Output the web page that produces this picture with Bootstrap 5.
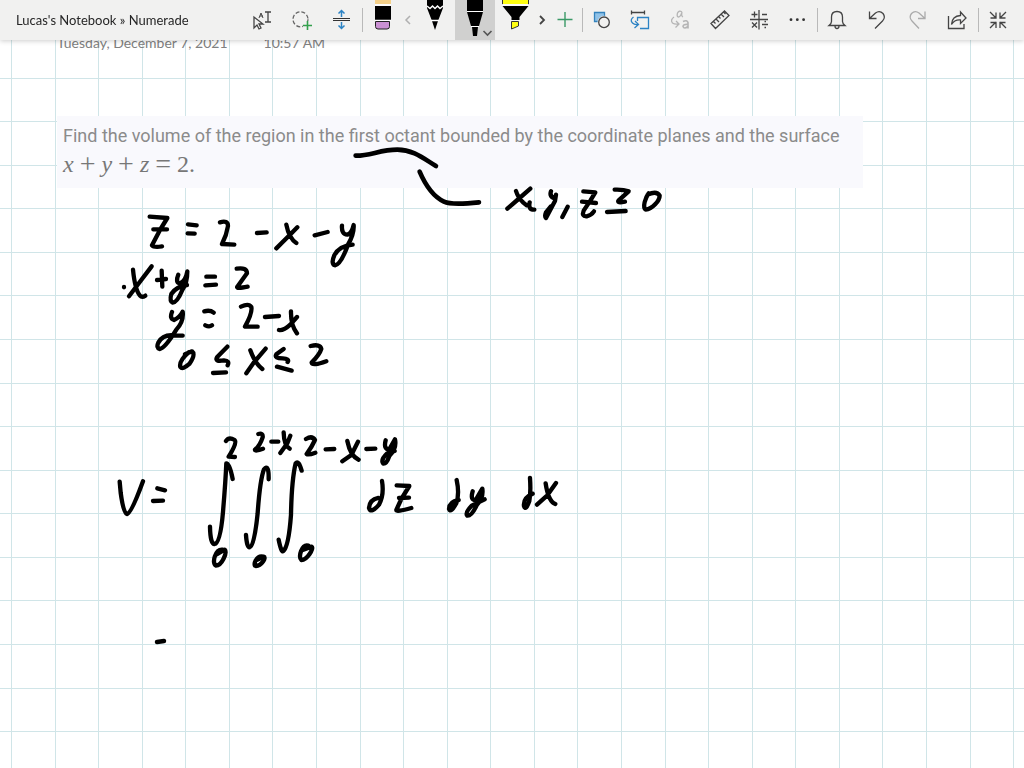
<!DOCTYPE html>
<html lang="en">
<head>
<meta charset="utf-8">
<meta name="viewport" content="width=device-width, initial-scale=1">
<title>Lucas's Notebook » Numerade</title>
<link rel="stylesheet" href="https://cdn.jsdelivr.net/npm/bootstrap@5.3.0/dist/css/bootstrap.min.css">
<style>
  body { font-family: Lato, "Open Sans", sans-serif; background: #fff; color: #262626; }
  .topbar { height: 40px; padding: 0 5px 0 16px; background: #f1f1f0; box-shadow: 0 1px 5px rgba(0,0,0,.2); }
  .crumb { font-size: 13px; line-height: 20px; color: #262626; }
  .tool { width: 40px; height: 40px; padding: 0; border: 0; border-radius: 0; flex: none; display: block; }
  .tool svg { display: block; width: 100%; height: 40px; fill: none; stroke: #444; stroke-width: 1.3; }
  .tool:disabled { border: 0; opacity: 1; }
  .tool.medium { width: 39px; }
  .tool.narrow { width: 12px; }
  .tool.adder { width: 35px; }
  .tool.picked { background: #d0d0cf; }
  .divide { width: 1px; height: 24px; background: #b9b9b9; flex: none; }
  .sheet { min-height: 100vh; padding: 33px 16px 0 57px; }
  .paper, .ink { left: 0; top: 0; }
  .ink { fill: none; stroke: #000; stroke-linecap: round; stroke-linejoin: round; pointer-events: none; }
  .stamp { font-size: 14px; line-height: 20px; color: #808080; gap: 36px; margin-bottom: 63px; }
  .problem { max-width: 806px; height: 72px; padding: 6px; background: #f9f9fd; color: #8b8b8b; font-family: Roboto, sans-serif; font-size: 18px; line-height: 28px; }
  .formula { gap: 6px; font-family: "Liberation Serif", serif; font-size: 24px; line-height: 28px; color: #777; }
  .formula .sign { font-size: 28px; }
</style>
</head>
<body>
<header class="topbar fixed-top d-flex align-items-center">
  <div class="crumb flex-fill text-nowrap">Lucas's Notebook » Numerade</div>
  <nav class="d-flex align-items-center" aria-label="Drawing tools">
    <button class="btn tool" aria-label="Select text"><svg viewBox="0 0 40 40"><path d="M12 17v11l3-3 2 4 2-1-2-4h4z"/><path d="M23 12h6M26 12v10M23 22h6"/><path d="M17 18l2-5 2 5M18 16h3" stroke-width="1"/></svg></button>
    <button class="btn tool" aria-label="Lasso select"><svg viewBox="0 0 40 40"><circle cx="18.5" cy="19.3" r="7.5" stroke-dasharray="4 2" stroke="#666"/><path d="M21 25.5h9M25.5 21v9" stroke="#f1f1f0" stroke-width="4"/><path d="M21 25.5h9M25.5 21v9" stroke="#33a04c" stroke-width="1.6"/></svg></button>
    <button class="btn tool" aria-label="Insert space"><svg viewBox="0 0 40 40"><path d="M11 18.5h17M11 20.5h17" stroke="#333" stroke-width="1.2"/><path d="M19.5 17v-6M16.5 13.5l3-3 3 3M19.5 22v6M16.5 25.5l3 3 3-3" stroke="#2c83c4" stroke-width="1.5"/></svg></button>
    <span class="divide"></span>
    <button class="btn tool" aria-label="Eraser"><svg viewBox="0 0 40 40" stroke="none"><path d="M12 0h16v4H12z" fill="#f4d08a" stroke="none"/><path d="M12 6h16v14H12z" fill="#000" stroke="none"/><path d="M12 5h16M12 20.5h16" stroke="#fff"/><path d="M12.500 21.500h14v5q0 2.500-2.500 2.500h-9q-2.500 0-2.500-2.500z" fill="#ca91d3" stroke="#222" stroke-width="1"/></svg></button>
    <button class="btn tool narrow" aria-label="Previous pens" disabled><svg viewBox="0 0 12 40"><path d="M7 16l-4 4 4 4" stroke="#b0b0b0" stroke-width="1.500"/></svg></button>
    <button class="btn tool" aria-label="Pencil"><svg viewBox="0 0 40 40"><path d="M12 0h16v8l-5 13-3 9-3-9-5-13z" fill="#000" stroke="none"/><path d="M12 6l3 2.500 2.500-2.500 2.500 2.500 2.500-2.500 2.500 2.500 3-2.500M16 20.500h8" stroke="#fff" stroke-width="1.500"/></svg></button>
    <button class="btn tool picked" aria-label="Black pen"><svg viewBox="0 0 40 40"><path d="M12 0h16v12l-4 14-1 1-1 9h-4l-1-9-1-1-4-14z" fill="#000" stroke="none"/><path d="M12 11.500h16M16 26.500h8" stroke="#fff" stroke-width="1.200"/><path d="M28.500 31l4 4 4-4" stroke="#555" stroke-width="1.600"/></svg></button>
    <button class="btn tool" aria-label="Yellow highlighter"><svg viewBox="0 0 40 40"><path d="M7 0h27v4H7z" fill="#ffff12" stroke="none"/><path d="M7.500 0v4.500M33.500 0v4.500" stroke="#333" stroke-width="1"/><path d="M7 5h27" stroke="#fff"/><path d="M7.500 6h26L24.500 17v3h-8v-3z" fill="#000" stroke="none"/><path d="M16.500 21.500h7v4.500l-7 3z" fill="#ffff12" stroke="#333" stroke-width="1"/></svg></button>
    <button class="btn tool narrow" aria-label="More pens"><svg viewBox="0 0 12 40"><path d="M5 16l4 4-4 4" stroke-width="1.800"/></svg></button>
    <button class="btn tool adder" aria-label="Add pen"><svg viewBox="0 0 35 40"><path d="M10.500 19.500h15M18 12v15" stroke="#3a9966" stroke-width="1.400"/></svg></button>
    <span class="divide"></span>
    <button class="btn tool medium" aria-label="Shapes"><svg viewBox="0 0 39 40"><path d="M11.500 12.500h10v9h-10z" fill="#90c2e8" stroke="#3382bd"/><circle cx="21" cy="22.300" r="6.500" fill="#f1f1f0" stroke="none"/><circle cx="21" cy="22.300" r="5.300" fill="#f1f1f0"/></svg></button>
    <button class="btn tool medium" aria-label="Ink to shape"><svg viewBox="0 0 39 40"><path d="M9 12.500h14M9.500 10.500v4M22.500 10.500v4"/><path d="M15.500 21v-3.500h11v11h-8.500" stroke="#2c83c4"/><path d="M11.500 17q-4 3-1 6 2 2 5 1.500M13 21l3.500 3.500-4 3.500" stroke="#2c83c4"/></svg></button>
    <button class="btn tool medium" aria-label="Ink to text" disabled><svg viewBox="0 0 39 40"><g stroke="#b5b5b5"><path d="M21 12q-3-2-4.500 1-1 4 1 4 2 0 3.500-5-1 4 1 5"/><path d="M22 21.500q4-2 5 1v6M27 24.500q-5-.5-5 2 1 3 5 0" stroke-width="1.600"/><path d="M13 17q-4 3-1.500 6 2 1.500 6 1M15 21l3 3-3.500 3.500"/></g></svg></button>
    <button class="btn tool medium" aria-label="Ruler"><svg viewBox="0 0 39 40"><path d="M11 23.500l13.500-12.500 4.500 4.500-13.500 13zM13.500 21.500l2 2M16 19l3 3M18.500 16.500l2 2M21 14l3 3M23.500 12l2 2"/></svg></button>
    <button class="btn tool medium" aria-label="Math"><svg viewBox="0 0 39 40"><path d="M11 19.500h18M20 10v19.500M12.500 14.500h6M15.500 11.500v6M23 14.500h5M13 22.500l5 5M18 22.500l-5 5M23 24.500h6"/><path d="M25.500 21.500h1.500M25.500 27.500h1.500" stroke-width="1.500"/></svg></button>
    <button class="btn tool medium" aria-label="More options"><svg viewBox="0 0 39 40"><g fill="#333" stroke="none"><circle cx="13" cy="19.700" r="1.400"/><circle cx="19.300" cy="19.700" r="1.400"/><circle cx="25.600" cy="19.700" r="1.400"/></g></svg></button>
    <span class="divide"></span>
    <button class="btn tool" aria-label="Notifications"><svg viewBox="0 0 40 40"><path d="M11 25.500q2.500-2 2.500-4v-4.500q0-5.500 5.500-5.500t5.500 5.500v4.500q0 2 2.500 4zM17 26q0 2.500 2 2.500t2-2.500"/></svg></button>
    <button class="btn tool" aria-label="Undo"><svg viewBox="0 0 40 40"><path d="M11.500 11.500v7h7M11.500 18.500l6-5.500q4-3 7.500.5 3 4-.5 7.500l-7.500 7.500"/></svg></button>
    <button class="btn tool" aria-label="Redo" disabled><svg viewBox="0 0 40 40"><path d="M27 11.500v7h-7M27 18.500l-6-5.500q-4-3-7.500.5-3 4 .5 7.500l7 7.500" stroke="#aaa"/></svg></button>
    <button class="btn tool" aria-label="Share"><svg viewBox="0 0 40 40"><path d="M10.500 16v12.500h15.500v-4.500"/><path d="M22.500 12l5.500 6-5.500 5.500v-3.500q-6-.5-9 4.500.5-8.500 9-9z"/></svg></button>
    <span class="divide"></span>
    <button class="btn tool" aria-label="Exit full page view"><svg viewBox="0 0 40 40"><path d="M11 12l6 6M11.500 18h5.500v-5.500M27 12l-6 6M26.500 18h-5.500v-5.500M11 28l6-6M11.500 22.500h5.500v5.500M27 28l-6-6M26.500 22.500h-5.500v5.500"/></svg></button>
  </nav>
</header>

<main class="sheet position-relative">
  <svg class="paper position-absolute w-100 h-100" aria-hidden="true">
    <defs><pattern id="grid" x="11" y="34" width="305" height="305" patternUnits="userSpaceOnUse">
      <path d="M.5 0v305M44.500 0v305M87.500 0v305M131.500 0v305M174.500 0v305M218.500 0v305M261.500 0v305M0 .5h305M0 44.500h305M0 87.500h305M0 131.500h305M0 174.500h305M0 218.500h305M0 261.500h305" fill="none" stroke="#d0e5e8"/>
    </pattern></defs>
    <rect width="100%" height="100%" fill="url(#grid)"/>
  </svg>
  <div class="stamp position-relative d-flex"><span>Tuesday, December 7, 2021</span><span>10:57 AM</span></div>
  <section class="problem position-relative">
    <div class="text-nowrap">Find the volume of the region in the first octant bounded by the coordinate planes and the surface</div>
    <div class="formula d-flex"><i>x</i> <span class="sign">+</span> <i>y</i> <span class="sign">+</span> <i>z</i> <span class="sign">=</span> <span>2.</span></div>
  </section>

  <svg class="ink position-absolute" width="700" height="700" aria-label="Handwritten solution">
    <!-- underline and connector -->
    <g transform="translate(50 105) scale(.3333)" stroke-width="14">
      <path d="M917 152C960 153 990 134 1042 134C1090 134 1120 160 1158 183M1109 200C1124 235 1150 275 1182 290Q1205 301 1287 292"/>
    </g>
    <!-- x, y, z ≥ 0 -->
    <g transform="translate(500 180) scale(.3333)" stroke-width="13">
      <path d="M48 33Q54 53 70 68L80 76M91 26L52 60L22 86M89 67Q84 90 103 89M153 34Q148 48 161 54M168 44L165 63L138 114Q133 110 138 97L152 80M203 80L187 111"/>
      <path d="M250 34L286 37L271 62L251 92Q244 110 260 109Q274 106 282 94M246 65L288 69M344 29Q370 28 386 34L356 61Q349 70 375 65M321 96L377 93M446 40C436 53 427 81 437 89C457 87 479 62 479 47Q470 31 443 44"/>
    </g>
    <!-- bounds on z, y and x -->
    <g transform="translate(110 200) scale(.3333)" stroke-width="13">
      <path d="M119 50L172 54L150 90L126 136Q132 143 156 139M130 88L171 88M234 73L260 76M233 100L254 101M330 67Q354 60 354 78Q350 105 336 132L373 134M441 99L470 97M529 74Q537 115 559 129M562 82Q535 110 499 145M614 106L653 96M696 77Q694 103 712 104Q725 101 731 75Q733 101 714 134Q693 193 675 196Q662 191 673 166Q688 137 728 134"/>
      <path d="M42 261L42 262M69 209Q75 270 90 287Q96 294 106 287M125 199L87 249L57 289M155 212L157 260M141 240L168 237M205 224Q195 248 210 250Q227 243 232 214Q232 250 217 270Q202 307 188 308Q178 303 184 282Q198 260 231 255M289 230L315 230M286 256L318 254M380 206Q411 201 411 220L382 260Q378 267 413 260"/>
      <path d="M186 336Q178 356 192 360Q210 352 218 335Q222 364 199 389Q165 445 149 447Q138 443 145 428Q158 404 188 406L218 407M283 334Q300 329 311 338M286 376Q298 382 306 376M393 320Q416 309 424 321Q428 338 405 380L443 380M465 351L507 348M543 334Q542 375 561 400M561 351L541 374Q520 393 507 390"/>
      <path d="M236 457Q206 483 211 501Q218 510 238 492Q258 463 246 454L225 463M352 440L321 472Q313 486 342 481Q360 482 353 496M309 519L348 517M421 451Q435 490 457 507M467 446L432 487L409 520M521 447L499 463Q492 475 518 475Q539 477 533 486M501 500L545 512M602 438Q631 431 634 447Q629 464 605 488Q607 499 649 484"/>
    </g>
    <!-- triple integral with its limits -->
    <g transform="translate(100 420) scale(.3333)" stroke-width="13">
      <path d="M59 185L62 218Q70 278 81 282Q94 280 129 184M172 205L195 211M159 243L189 242M330 320Q331 373 344 372Q361 369 369 276Q377 180 379 130Q389 129 398 177M438 345Q441 386 450 381Q463 378 473 280Q480 180 492 148Q507 130 506 178M536 359Q544 399 550 393Q566 380 573 285Q575 180 587 130Q596 119 605 152"/>
      <path d="M378 63Q387 50 404 60Q413 68 386 110L405 111M475 42Q490 38 488 52Q480 77 465 89Q464 95 489 86M514 65L535 65M551 37Q552 77 569 86M571 47L562 70L541 99M618 57Q636 46 645 60Q636 80 620 102Q625 106 646 98M677 88L703 87M742 63Q751 108 776 119M774 65L754 105L727 124M799 87L826 86M857 61Q850 88 868 88L885 58Q891 85 868 108Q860 132 850 131Q841 120 861 101L884 93"/>
      <path d="M368 389C346 386 334 430 348 437C365 437 383 398 374 389L350 403M490 410C469 404 457 438 468 438C485 438 500 412 491 410L473 419M625 377C606 371 593 412 604 420C621 421 643 384 635 380L608 390"/>
    </g>
    <!-- differentials -->
    <g transform="translate(350 430) scale(.3333)" stroke-width="13">
      <path d="M96 153Q103 194 87 224Q63 252 57 234Q59 209 85 204M140 166L178 168L154 207L139 240Q138 247 184 234M147 204L177 203M320 150Q329 191 319 220Q302 251 297 237Q298 215 326 210M368 184Q360 211 377 210L397 176Q401 203 381 224Q365 259 352 257Q344 249 365 227L404 208M540 144Q543 187 538 213Q527 244 522 228Q519 203 548 191M587 160Q595 214 616 222M618 159L592 196L561 224"/>
    </g>
    <path d="M157 642L164 641" stroke-width="4.500"/>
  </svg>
</main>
<script src="https://cdn.jsdelivr.net/npm/bootstrap@5.3.0/dist/js/bootstrap.bundle.min.js"></script>
</body>
</html>
